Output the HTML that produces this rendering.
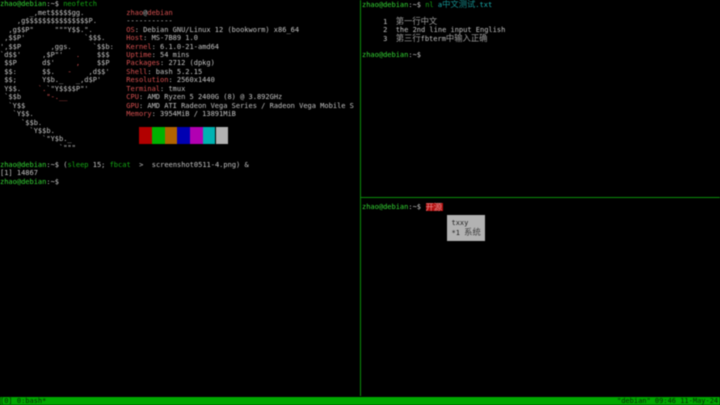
<!DOCTYPE html>
<html><head><meta charset="utf-8">
<style>
html,body{margin:0;padding:0;background:#000;width:720px;height:405px;overflow:hidden}
#s{position:absolute;left:0;top:0;width:720px;height:405px;overflow:hidden;filter:blur(.45px);background:#000}
.l{position:absolute;white-space:pre;font:7px/8.44px "DejaVu Sans Mono","Liberation Mono",monospace;color:#c4c4c4;height:8.44px;margin-top:.4px}
.g{color:#34d834}.d{color:#14a814}.r{color:#d85050}.c{color:#1ab0b0}
.k{font:8.3px/8.44px "Noto Sans CJK SC","WenQuanYi Zen Hei",sans-serif;opacity:.8}
.b{position:absolute;background:#0a8c0a}
.sw{position:absolute;top:127px;height:16.9px;width:12.7px}
</style></head><body><div id="s">
<div class="l" style="left:0;top:0"><span class="g">zhao@debian</span>:~$ <span class="d">neofetch</span></div>
<div class="l" style="left:0;top:8.44px">       _,met$$$$$gg.</div>
<div class="l" style="left:0;top:16.88px">    ,g$$$$$$$$$$$$$$$P.</div>
<div class="l" style="left:0;top:25.31px">  ,g$$P"     """Y$$.".</div>
<div class="l" style="left:0;top:33.75px"> ,$$P'              `$$$.</div>
<div class="l" style="left:0;top:42.19px">',$$P       ,ggs.     `$$b:</div>
<div class="l" style="left:0;top:50.63px">`d$$'     ,$P"'   <span class="r">.</span>    $$$</div>
<div class="l" style="left:0;top:59.06px"> $$P      d$'     <span class="r">,</span>    $$P</div>
<div class="l" style="left:0;top:67.5px"> $$:      $$.   <span class="r">-</span>    ,d$$'</div>
<div class="l" style="left:0;top:75.94px"> $$;      Y$b._   _,d$P'</div>
<div class="l" style="left:0;top:84.38px"> Y$$.    <span class="r">`.</span>`"Y$$$$P"'</div>
<div class="l" style="left:0;top:92.81px"> `$$b      <span class="r">"-.__</span></div>
<div class="l" style="left:0;top:101.25px">  `Y$$</div>
<div class="l" style="left:0;top:109.69px">   `Y$$.</div>
<div class="l" style="left:0;top:118.13px">     `$$b.</div>
<div class="l" style="left:0;top:126.56px">       `Y$$b.</div>
<div class="l" style="left:0;top:135px">          `"Y$b._</div>
<div class="l" style="left:0;top:143.44px">              `"""</div>

<div class="l" style="left:126.3px;top:8.44px"><span class="r">zhao</span>@<span class="r">debian</span></div>
<div class="l" style="left:126.3px;top:16.88px">-----------</div>
<div class="l" style="left:126.3px;top:25.31px"><span class="r">OS</span>: Debian GNU/Linux 12 (bookworm) x86_64</div>
<div class="l" style="left:126.3px;top:33.75px"><span class="r">Host</span>: MS-7B89 1.0</div>
<div class="l" style="left:126.3px;top:42.19px"><span class="r">Kernel</span>: 6.1.0-21-amd64</div>
<div class="l" style="left:126.3px;top:50.63px"><span class="r">Uptime</span>: 54 mins</div>
<div class="l" style="left:126.3px;top:59.06px"><span class="r">Packages</span>: 2712 (dpkg)</div>
<div class="l" style="left:126.3px;top:67.5px"><span class="r">Shell</span>: bash 5.2.15</div>
<div class="l" style="left:126.3px;top:75.94px"><span class="r">Resolution</span>: 2560x1440</div>
<div class="l" style="left:126.3px;top:84.38px"><span class="r">Terminal</span>: tmux</div>
<div class="l" style="left:126.3px;top:92.81px"><span class="r">CPU</span>: AMD Ryzen 5 2400G (8) @ 3.892GHz</div>
<div class="l" style="left:126.3px;top:101.25px"><span class="r">GPU</span>: AMD ATI Radeon Vega Series / Radeon Vega Mobile S</div>
<div class="l" style="left:126.3px;top:109.69px"><span class="r">Memory</span>: 3954MiB / 13891MiB</div>

<div class="sw" style="left:139.3px;background:#b20000"></div>
<div class="sw" style="left:152px;background:#00b200"></div>
<div class="sw" style="left:164.7px;background:#b26400"></div>
<div class="sw" style="left:177.4px;background:#0000b2"></div>
<div class="sw" style="left:190.1px;background:#b200b2"></div>
<div class="sw" style="left:202.8px;background:#00b2b2"></div>
<div class="sw" style="left:215.5px;background:#b2b2b2"></div>

<div class="l" style="left:0;top:160.31px"><span class="g">zhao@debian</span>:~$ (<span class="d">sleep</span> 15; <span class="d">fbcat</span>  &gt;  screenshot0511-4.png) &amp;</div>
<div class="l" style="left:0;top:168.75px">[1] 14867</div>
<div class="l" style="left:0;top:177.19px"><span class="g">zhao@debian</span>:~$</div>

<div class="b" style="left:360px;top:0;width:1px;height:396px"></div>
<div class="b" style="left:361px;top:197px;width:359px;height:1px"></div>

<div class="l" style="left:362px;top:0"><span class="g">zhao@debian</span>:~$ <span class="d">nl</span> <span class="c">a<span class="k">中文测试</span>.txt</span></div>
<div class="l" style="left:362px;top:16.88px">     1  <span class="k">第一行中文</span></div>
<div class="l" style="left:362px;top:25.31px">     2  the 2nd line input English</div>
<div class="l" style="left:362px;top:33.75px">     3  <span class="k">第三行</span>fbterm<span class="k">中输入正确</span></div>
<div class="l" style="left:362px;top:50.63px"><span class="g">zhao@debian</span>:~$</div>

<div class="l" style="left:362px;top:202.5px"><span class="g">zhao@debian</span>:~$</div>
<div style="position:absolute;left:425.5px;top:202.8px;width:17px;height:8.44px;background:#b21010"></div>
<div class="l k" style="left:425.5px;top:202.5px;color:#f0a8a8">开源</div>

<div style="position:absolute;left:447px;top:215px;width:38px;height:26px;background:#b2b2b2"></div>
<div class="l" style="left:451.5px;top:219px;color:#1c1c1c">txxy</div>
<div class="l" style="left:451.5px;top:227.5px;color:#1c1c1c">*1 <span class="k">系统</span></div>

<div class="b" style="left:0;top:396.5px;width:720px;height:8.5px;background:#00a800"></div>
<div class="l" style="left:0;top:396.5px;color:#062a06">[0] 0:bash*</div>
<div class="l" style="left:617px;top:396.5px;color:#062a06">"debian" 09:46 11-May-24</div>
</div></body></html>
